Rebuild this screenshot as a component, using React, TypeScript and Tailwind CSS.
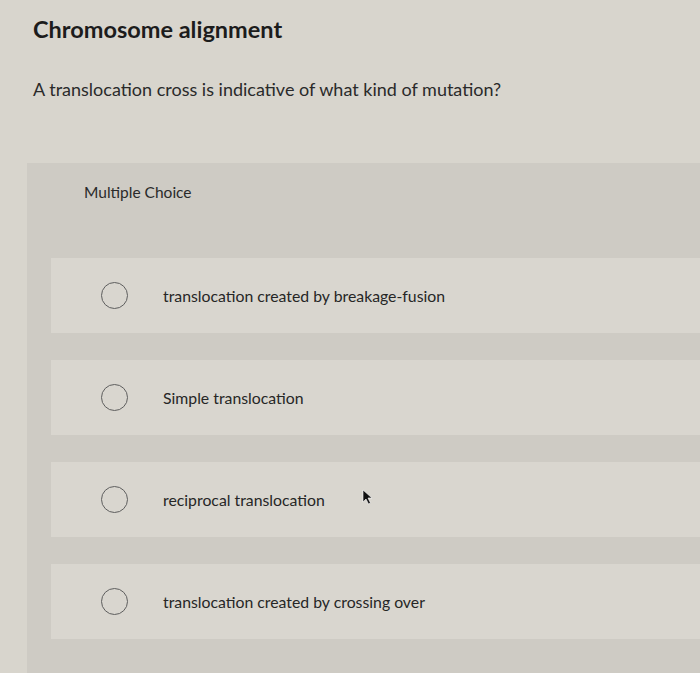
const options = [
    'translocation created by breakage-fusion',
    'Simple translocation',
    'reciprocal translocation',
    'translocation created by crossing over',
];

export default function App() {
    return (
        <div className="h-[673px] w-[700px] overflow-hidden bg-[#d8d5cd] text-[#222] font-['Lato','Liberation_Sans',sans-serif]">
            <div className="pl-[33px] pt-[14px]">
                <h1 className="text-[23.5px] font-bold leading-[30px] text-[#1c1c1c]">Chromosome alignment</h1>
                <p className="mt-[33px] text-[18px] leading-[24px] text-[#2a2a2a]">
                    A translocation cross is indicative of what kind of mutation?
                </p>
            </div>

            <div className="ml-[27px] mt-[62px] h-[520px] bg-[#cecbc4] pt-[18px]">
                <div className="pl-[57px] text-[15.5px] leading-[22px] text-[#2a2a2a]">Multiple Choice</div>

                <div className="mt-[55px] ml-[24px] flex flex-col gap-[27px]">
                    {options.map((text, i) => (
                        <div key={i} className="relative flex h-[75px] items-center bg-[#d9d6cf]">
                            <span className="ml-[50px] h-[27px] w-[27px] shrink-0 rounded-full border-[1.5px] border-[#5e5e5e]" />
                            <span className="ml-[35px] text-[15.8px] text-[#262626]">{text}</span>
                            {i === 2 && (
                                <svg className="absolute left-[311px] top-[27px]" width="12" height="16" viewBox="0 0 12 16">
                                    <path d="M1 1 L1 13 L4 10 L6.5 15 L8.5 14 L6 9 L10 9 Z" fill="#111" stroke="#fff" strokeWidth="0.6" />
                                </svg>
                            )}
                        </div>
                    ))}
                </div>
            </div>
        </div>
    );
}
